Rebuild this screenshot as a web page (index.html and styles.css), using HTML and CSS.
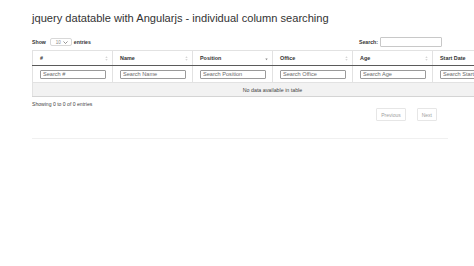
FILE: index.html
```html
<!DOCTYPE html>
<html>
<head>
<meta charset="utf-8">
<title>jquery datatable with Angularjs</title>
<link rel="stylesheet" href="styles.css">
</head>
<body>
<div class="container">
  <h3 class="title">jquery datatable with Angularjs - individual column searching</h3>
  <div class="controls">
    <label class="length">Show <span class="select">10 <svg class="chev" width="5" height="3" viewBox="0 0 5 3"><path d="M0.5 0.5 L2.5 2.5 L4.5 0.5" fill="none" stroke="#666" stroke-width="0.7"/></svg></span> entries</label>
    <label class="search">Search: <span class="search-box"></span></label>
  </div>
  <table class="grid">
    <colgroup><col><col><col><col><col><col></colgroup>
    <thead>
      <tr class="heads">
        <th><div class="th-in"><span>#</span><svg class="sort" width="3" height="5" viewBox="0 0 3 5"><path d="M1.5 0.3 L2.7 2 L0.3 2Z M1.5 4.7 L2.7 3 L0.3 3Z" fill="#d6d6d6"/></svg></div></th>
        <th><div class="th-in"><span>Name</span><svg class="sort" width="3" height="5" viewBox="0 0 3 5"><path d="M1.5 0.3 L2.7 2 L0.3 2Z M1.5 4.7 L2.7 3 L0.3 3Z" fill="#d6d6d6"/></svg></div></th>
        <th><div class="th-in"><span>Position</span><svg class="sort" width="3" height="5" viewBox="0 0 3 5"><path d="M1.5 4.3 L2.7 2.6 L0.3 2.6Z" fill="#8a8a8a"/></svg></div></th>
        <th><div class="th-in"><span>Office</span><svg class="sort" width="3" height="5" viewBox="0 0 3 5"><path d="M1.5 0.3 L2.7 2 L0.3 2Z M1.5 4.7 L2.7 3 L0.3 3Z" fill="#d6d6d6"/></svg></div></th>
        <th><div class="th-in"><span>Age</span><svg class="sort" width="3" height="5" viewBox="0 0 3 5"><path d="M1.5 0.3 L2.7 2 L0.3 2Z M1.5 4.7 L2.7 3 L0.3 3Z" fill="#d6d6d6"/></svg></div></th>
        <th><div class="th-in"><span>Start Date</span><svg class="sort" width="3" height="5" viewBox="0 0 3 5"><path d="M1.5 0.3 L2.7 2 L0.3 2Z M1.5 4.7 L2.7 3 L0.3 3Z" fill="#d6d6d6"/></svg></div></th>
      </tr>
    </thead>
    <tbody>
      <tr class="filters">
        <td><input type="text" placeholder="Search #"></td>
        <td><input type="text" placeholder="Search Name"></td>
        <td><input type="text" placeholder="Search Position"></td>
        <td><input type="text" placeholder="Search Office"></td>
        <td><input type="text" placeholder="Search Age"></td>
        <td><input type="text" placeholder="Search Start Date"></td>
      </tr>
      <tr class="empty">
        <td colspan="6">No data available in table</td>
      </tr>
    </tbody>
  </table>
  <div class="foot">
    <div class="info">Showing 0 to 0 of 0 entries</div>
    <div class="paginate">
      <span class="btn">Previous</span>
      <span class="btn">Next</span>
    </div>
  </div>
  <div class="rule"></div>
</div>
</body>
</html>
```

FILE: styles.css
```css
html, body {
  margin: 0;
  padding: 0;
  background: #ffffff;
}
body {
  width: 474px;
  height: 266px;
  overflow: hidden;
  font-family: "Liberation Sans", Arial, sans-serif;
  color: #333333;
}
.container {
  width: 416px;
  padding-left: 32px;
}
.title {
  margin: 0;
  padding-top: 11px;
  font-size: 11.1px;
  line-height: 14px;
  font-weight: normal;
  color: #333333;
}
.controls {
  display: flex;
  justify-content: space-between;
  align-items: center;
  margin-top: 12px;
  height: 10px;
  width: 410px;
  font-size: 5.2px;
  font-weight: bold;
}
.length, .search {
  display: flex;
  align-items: center;
}
.select {
  display: inline-flex;
  align-items: center;
  justify-content: space-between;
  box-sizing: border-box;
  width: 22px;
  height: 8px;
  margin: 0 2px 0 4px;
  padding: 0 3px 0 5px;
  border: 1px solid #d8d8d8;
  border-radius: 2px;
  font-weight: normal;
  color: #888;
  font-size: 4.5px;
}
.search-box {
  display: inline-block;
  box-sizing: border-box;
  width: 62px;
  height: 10px;
  margin-left: 2px;
  border: 1px solid #c8c8c8;
  border-radius: 1px;
}
.grid {
  border-collapse: collapse;
  table-layout: fixed;
  width: 480px;
  margin-top: 3px;
}
.grid col {
  width: 80px;
}
.heads th {
  box-sizing: border-box;
  height: 15px;
  padding: 0 4px 0 7px;
  border: 1px solid #e2e2e2;
  border-bottom: 1px solid #5a5a5a;
  text-align: left;
  font-size: 5.4px;
  font-weight: bold;
  color: #333;
}
.th-in {
  display: flex;
  justify-content: space-between;
  align-items: center;
}
.filters td {
  box-sizing: border-box;
  height: 17px;
  padding: 0 7px;
  border-left: 1px solid #e2e2e2;
  border-right: 1px solid #e2e2e2;
}
.filters input {
  display: block;
  box-sizing: border-box;
  width: 66px;
  height: 9px;
  margin: 0;
  padding: 0 2px;
  border: 1px solid #9a9a9a;
  border-radius: 1px;
  font-family: "Liberation Sans", Arial, sans-serif;
  font-size: 5.6px;
  color: #333;
  background: #fff;
  outline: none;
}
.filters input::placeholder {
  color: #6a6a6a;
}
.empty td {
  box-sizing: border-box;
  height: 14px;
  padding: 0;
  background: #f2f2f2;
  border: 1px solid #e2e2e2;
  border-bottom: 1px solid #d4d4d4;
  text-align: center;
  font-size: 5.3px;
  color: #444;
}
.foot {
  display: flex;
  justify-content: space-between;
  align-items: flex-start;
  width: 416px;
  margin-top: 4px;
}
.info {
  font-size: 5.1px;
  color: #444;
}
.paginate {
  display: flex;
  gap: 11px;
  margin-top: 7px;
  margin-right: 11px;
}
.btn {
  display: inline-flex;
  align-items: center;
  justify-content: center;
  box-sizing: border-box;
  height: 13px;
  padding: 0 4px;
  border: 1px solid #e6e6e6;
  border-radius: 1px;
  font-size: 5px;
  color: #a0a0a0;
}
.rule {
  margin-top: 17px;
  height: 1px;
  width: 416px;
  background: #f0f0f0;
}
```
